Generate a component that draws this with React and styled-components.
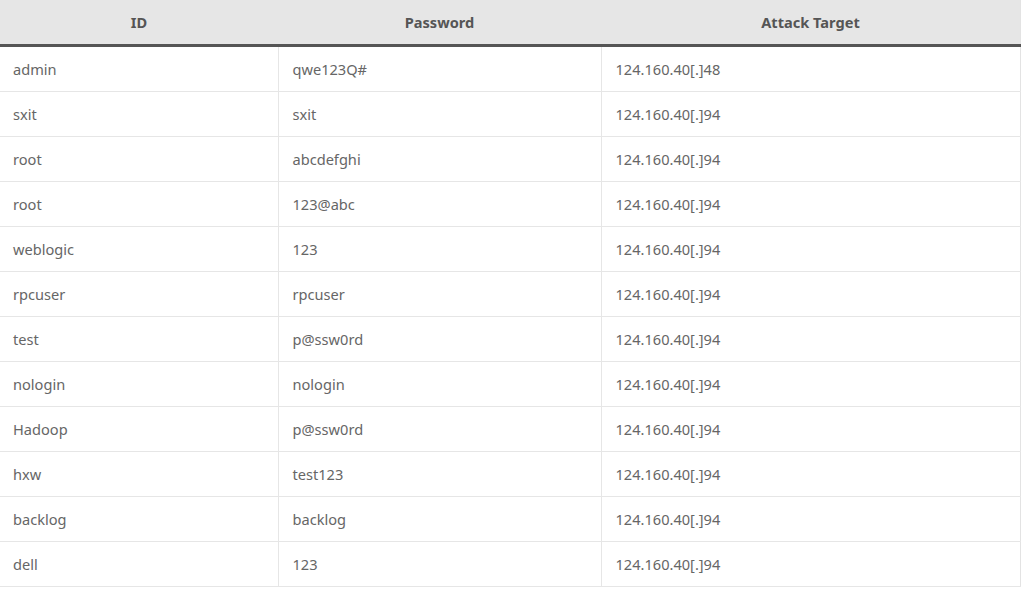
import React from "react";
import styled, { createGlobalStyle } from "styled-components";

const rows = [
  ["admin", "qwe123Q#", "124.160.40[.]48"],
  ["sxit", "sxit", "124.160.40[.]94"],
  ["root", "abcdefghi", "124.160.40[.]94"],
  ["root", "123@abc", "124.160.40[.]94"],
  ["weblogic", "123", "124.160.40[.]94"],
  ["rpcuser", "rpcuser", "124.160.40[.]94"],
  ["test", "p@ssw0rd", "124.160.40[.]94"],
  ["nologin", "nologin", "124.160.40[.]94"],
  ["Hadoop", "p@ssw0rd", "124.160.40[.]94"],
  ["hxw", "test123", "124.160.40[.]94"],
  ["backlog", "backlog", "124.160.40[.]94"],
  ["dell", "123", "124.160.40[.]94"],
];

function App() {
  return (
    <>
      <GlobalStyle />
      <Table>
        <colgroup>
          <col style={{ width: 278 }} />
          <col style={{ width: 323 }} />
          <col />
        </colgroup>
        <thead>
          <tr>
            <HeadCell>ID</HeadCell>
            <HeadCell>Password</HeadCell>
            <HeadCell>Attack Target</HeadCell>
          </tr>
        </thead>
        <tbody>
          {rows.map((row, i) => (
            <tr key={i}>
              {row.map((cell, j) => (
                <Cell key={j} $first={j === 0}>
                  {cell}
                </Cell>
              ))}
            </tr>
          ))}
        </tbody>
      </Table>
    </>
  );
}

const GlobalStyle = createGlobalStyle`
  body {
    margin: 0;
    background: #fff;
    font-family: "Noto Sans", "Open Sans", sans-serif;
  }
`;

const Table = styled.table`
  width: 1021px;
  border-collapse: collapse;
  table-layout: fixed;
  font-size: 14.6px;
  border-right: 1px solid #e3e3e3;
`;

const HeadCell = styled.th`
  height: 44px;
  padding: 0;
  background-color: #e6e6e6;
  color: #555;
  font-weight: 700;
  text-align: center;
  border-bottom: 3px solid #555;
`;

const Cell = styled.td`
  height: 44px;
  padding: 0 13px 0 ${(p) => (p.$first ? "13px" : "14px")};
  color: #666;
  border-bottom: 1px solid #e6e6e6;
  border-left: ${(p) => (p.$first ? "none" : "1px solid #e6e6e6")};
`;

export default App;
